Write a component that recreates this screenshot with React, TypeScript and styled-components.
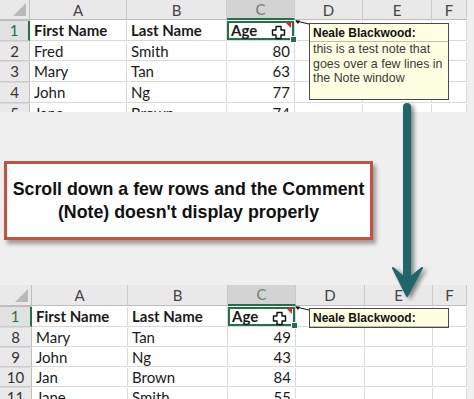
import React from "react";
import styled, {createGlobalStyle, css} from "styled-components";

const GlobalStyle = createGlobalStyle`
    html, body {
        margin: 0;
        padding: 0;
        background: #efefef;
    }
`;

const Page = styled.div`
    position: relative;
    width: 474px;
    height: 399px;
    overflow: hidden;
    background: #efefef;
    font-family: Lato, "Open Sans", sans-serif;
`;

const Sheet = styled.div<{ $height: number }>`
    position: relative;
    width: 467px;
    height: ${p => p.$height}px;
    overflow: hidden;
    background: #fff;
`;

const Row = styled.div<{ $cols: string, $height: number }>`
    display: grid;
    grid-template-columns: ${p => p.$cols};
    height: ${p => p.$height}px;
`;

const Cell = styled.div<{ $right?: boolean, $bold?: boolean, $selected?: boolean }>`
    position: relative;
    box-sizing: border-box;
    display: flex;
    align-items: center;
    justify-content: ${p => p.$right ? "flex-end" : "flex-start"};
    padding: 0 4px;
    border-right: 1px solid #dadada;
    border-bottom: 1px solid #dadada;
    font-size: 15px;
    font-weight: ${p => p.$bold ? 700 : 400};
    color: #1a1a1a;
    white-space: nowrap;
    ${p => p.$selected && css`
        box-shadow: inset 0 0 0 2px #217346;
    `}
`;

const ColHead = styled.div<{ $selected?: boolean }>`
    box-sizing: border-box;
    display: flex;
    align-items: center;
    justify-content: center;
    background: ${p => p.$selected ? "#d3d3d3" : "#e9e9e9"};
    border-right: 1px solid #cacaca;
    border-bottom: ${p => p.$selected ? "2px solid #217346" : "1px solid #bdbdbd"};
    font-size: 15px;
    color: ${p => p.$selected ? "#6d7f74" : "#444"};
`;

const Corner = styled.div`
    position: relative;
    box-sizing: border-box;
    background: #e9e9e9;
    border-right: 1px solid #bdbdbd;
    border-bottom: 1px solid #bdbdbd;

    &::after {
        content: "";
        position: absolute;
        right: 3px;
        bottom: 3px;
        border-style: solid;
        border-width: 0 0 13px 13px;
        border-color: transparent transparent #b9b9b9 transparent;
    }
`;

const RowHead = styled.div<{ $selected?: boolean }>`
    box-sizing: border-box;
    display: flex;
    align-items: center;
    justify-content: center;
    background: ${p => p.$selected ? "#e1e1e1" : "#e9e9e9"};
    border-right: ${p => p.$selected ? "2px solid #217346" : "1px solid #bdbdbd"};
    border-bottom: 1px solid #cacaca;
    font-size: 15px;
    color: ${p => p.$selected ? "#217346" : "#333"};
`;

const FillHandle = styled.span`
    position: absolute;
    right: -3px;
    bottom: -3px;
    width: 5px;
    height: 5px;
    background: #217346;
    border: 1px solid #fff;
    z-index: 2;
`;

const CommentMark = styled.span`
    position: absolute;
    right: 3px;
    top: 1px;
    border-style: solid;
    border-width: 0 6px 6px 0;
    border-color: transparent #d23 transparent transparent;
`;

const Cursor = styled.svg`
    position: absolute;
    left: 44px;
    top: 4px;
    width: 15px;
    height: 15px;
`;

const NoteBox = styled.div<{ $top: number, $height: number }>`
    position: absolute;
    left: 309px;
    top: ${p => p.$top}px;
    width: 140px;
    height: ${p => p.$height}px;
    box-sizing: border-box;
    border: 1px solid #4a4a4a;
    background: #ffffe1;
    padding: 1px 3px;
    overflow: hidden;
    font-family: "Liberation Sans", Arial, sans-serif;
    color: #2a2a2a;
    z-index: 3;
`;

const NoteTitle = styled.div`
    margin: 0 -3px;
    padding: 0 3px;
    font-size: 12px;
    font-weight: 700;
    line-height: 16px;
    color: #111;
    border-bottom: 1px solid #bdbdb0;
`;

const NoteText = styled.div`
    font-size: 12.4px;
    line-height: 14.5px;
    color: #3a3a3a;
`;

const Connector = styled.svg<{ $top: number }>`
    position: absolute;
    left: 294px;
    top: ${p => p.$top}px;
    width: 18px;
    height: 8px;
    z-index: 4;
`;

const Middle = styled.div`
    box-sizing: border-box;
    height: 173px;
    padding: 49px 0 0 4px;
`;

const Callout = styled.div`
    box-sizing: border-box;
    width: 369px;
    height: 79px;
    border: 3px solid #c3523f;
    background: #fff;
    box-shadow: 3px 4px 4px rgba(0, 0, 0, 0.35);
    display: flex;
    align-items: center;
    justify-content: center;
    text-align: center;
    font-family: "Liberation Sans", Arial, sans-serif;
    font-weight: 700;
    font-size: 17.8px;
    line-height: 23px;
    color: #111;
`;

const Arrow = styled.svg`
    position: absolute;
    left: 386px;
    top: 100px;
    width: 48px;
    height: 204px;
    filter: drop-shadow(3px 2px 2px rgba(0, 0, 0, 0.45));
    z-index: 5;
`;

type Line = { n: string, a: string, b: string, c: string };

const topCols = "30px 97px 100px 68px 68px 69px 35px";
const bottomCols = "32px 96px 100px 68px 69px 68px 34px";

const topRows: { line: Line, h: number }[] = [
    {line: {n: "2", a: "Fred", b: "Smith", c: "80"}, h: 20},
    {line: {n: "3", a: "Mary", b: "Tan", c: "63"}, h: 21},
    {line: {n: "4", a: "John", b: "Ng", c: "77"}, h: 21},
    {line: {n: "5", a: "Jane", b: "Brown", c: "74"}, h: 21},
];

const bottomRows: { line: Line, h: number }[] = [
    {line: {n: "8", a: "Mary", b: "Tan", c: "49"}, h: 20},
    {line: {n: "9", a: "John", b: "Ng", c: "43"}, h: 20},
    {line: {n: "10", a: "Jan", b: "Brown", c: "84"}, h: 20},
    {line: {n: "11", a: "Jane", b: "Smith", c: "55"}, h: 20},
];

function PlusCursor() {
    return (
        <Cursor viewBox="0 0 15 15">
            <path d="M5 1.5h5v3.5h3.5v5H10v3.5H5V10H1.5V5H5z" fill="#fff" stroke="#111" strokeWidth="1.4"
                  strokeLinejoin="round"/>
        </Cursor>
    );
}

function Grid({cols, headH, firstH, rows, noteTop, noteH, full}: {
    cols: string,
    headH: number,
    firstH: number,
    rows: { line: Line, h: number }[],
    noteTop: number,
    noteH: number,
    full: boolean
}) {
    return (
        <>
            <Row $cols={cols} $height={headH}>
                <Corner/>
                {["A", "B", "C", "D", "E", "F", ""].map((l) =>
                    <ColHead key={l || "g"} $selected={l === "C"}>{l}</ColHead>)}
            </Row>
            <Row $cols={cols} $height={firstH}>
                <RowHead $selected>1</RowHead>
                <Cell $bold>First Name</Cell>
                <Cell $bold>Last Name</Cell>
                <Cell $bold $selected>
                    Age
                    <CommentMark/>
                    <PlusCursor/>
                    <FillHandle/>
                </Cell>
                <Cell/><Cell/><Cell/><Cell/>
            </Row>
            {rows.map(({line, h}) => (
                <Row key={line.n} $cols={cols} $height={h}>
                    <RowHead>{line.n}</RowHead>
                    <Cell>{line.a}</Cell>
                    <Cell>{line.b}</Cell>
                    <Cell $right>{line.c}</Cell>
                    <Cell/><Cell/><Cell/><Cell/>
                </Row>
            ))}
            <Connector $top={headH - 1} viewBox="0 0 18 8">
                <path d="M2 1 L15 4" stroke="#111" strokeWidth="1"/>
                <path d="M1 0.5 L6 0.5 L4 4 Z" fill="#111"/>
            </Connector>
            <NoteBox $top={noteTop} $height={noteH}>
                <NoteTitle>Neale Blackwood:</NoteTitle>
                {full && (
                    <NoteText>
                        this is a test note that<br/>
                        goes over a few lines in<br/>
                        the Note window
                    </NoteText>
                )}
            </NoteBox>
        </>
    );
}

export default function App() {
    return (
        <Page>
            <GlobalStyle/>
            <Sheet $height={112}>
                <Grid cols={topCols} headH={21} firstH={21} rows={topRows} noteTop={23} noteH={77} full/>
            </Sheet>
            <Middle>
                <Callout>
                    Scroll down a few rows and the Comment<br/>
                    (Note) doesn't display properly
                </Callout>
            </Middle>
            <Sheet $height={114}>
                <Grid cols={bottomCols} headH={22} firstH={21} rows={bottomRows} noteTop={23} noteH={20}
                      full={false}/>
            </Sheet>
            <Arrow viewBox="0 0 48 204">
                <path d="M21 7 L21 182" stroke="#1f666b" strokeWidth="8" strokeLinecap="round"/>
                <path d="M7 168 L21 196 L36 168 L21 180 Z" fill="#1f666b" stroke="#1f666b" strokeWidth="2"
                      strokeLinejoin="round"/>
            </Arrow>
        </Page>
    );
}
